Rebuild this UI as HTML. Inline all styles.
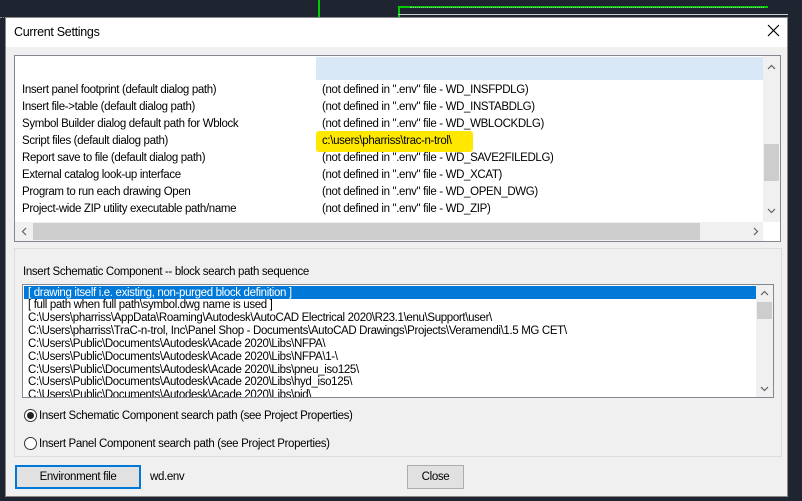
<!DOCTYPE html>
<html><head><meta charset="utf-8"><style>
*{margin:0;padding:0;box-sizing:border-box}
body{width:802px;height:501px;overflow:hidden;background:#1e2530;font-family:"Liberation Sans",sans-serif;font-size:11.5px;letter-spacing:-0.35px;color:#000;position:relative}
.a{position:absolute}
.t{position:absolute;white-space:nowrap;line-height:14px}
</style></head><body>
<div class="a" style="left:0;top:17px;width:310px;height:1px;border-top:1px dotted #888"></div>
<div class="a" style="left:318px;top:0;width:2px;height:17px;background:#0c0"></div>
<div class="a" style="left:398px;top:6px;width:370px;height:2px;background:#0c0"></div>
<div class="a" style="left:398px;top:6px;width:2px;height:11px;background:#0c0"></div>
<div class="a" style="left:410px;top:7px;width:354px;height:1px;border-top:1px dotted #bbb"></div>
<div class="a" style="left:398px;top:14px;width:390px;height:1px;background:#ccc"></div>
<div class="a" style="left:5px;top:17px;width:783px;height:480px;background:#f0f0f0;border:1px solid #888"></div>
<div class="a" style="left:6px;top:18px;width:781px;height:29px;background:#fff"></div>
<div class="t" style="left:14px;top:25px;font-size:12.5px;letter-spacing:-0.3px">Current Settings</div>
<svg class="a" style="left:767px;top:24px" width="13" height="13"><path d="M1 1L12 12M12 1L1 12" stroke="#000" stroke-width="1.2"/></svg>
<div class="a" style="left:14px;top:55px;width:767px;height:187px;background:#fff;border:1px solid #828790"></div>
<div class="a" style="left:316px;top:57px;width:447px;height:23px;background:#d9e8f6"></div>
<div class="a" style="left:316px;top:131px;width:157px;height:21px;background:#ffe800;border-radius:3px"></div>
<div class="t" style="left:22px;top:83px">Insert panel footprint (default dialog path)</div>
<div class="t" style="left:22px;top:100px">Insert file-&gt;table (default dialog path)</div>
<div class="t" style="left:22px;top:117px">Symbol Builder dialog default path for Wblock</div>
<div class="t" style="left:22px;top:134px">Script files (default dialog path)</div>
<div class="t" style="left:22px;top:151px">Report save to file (default dialog path)</div>
<div class="t" style="left:22px;top:168px">External catalog look-up interface</div>
<div class="t" style="left:22px;top:185px">Program to run each drawing Open</div>
<div class="t" style="left:22px;top:202px">Project-wide ZIP utility executable path/name</div>
<div class="t" style="left:322px;top:83px">(not defined in ".env" file - WD_INSFPDLG)</div>
<div class="t" style="left:322px;top:100px">(not defined in ".env" file - WD_INSTABDLG)</div>
<div class="t" style="left:322px;top:117px">(not defined in ".env" file - WD_WBLOCKDLG)</div>
<div class="t" style="left:322px;top:134px">c:\users\pharriss\trac-n-trol\</div>
<div class="t" style="left:322px;top:151px">(not defined in ".env" file - WD_SAVE2FILEDLG)</div>
<div class="t" style="left:322px;top:168px">(not defined in ".env" file - WD_XCAT)</div>
<div class="t" style="left:322px;top:185px">(not defined in ".env" file - WD_OPEN_DWG)</div>
<div class="t" style="left:322px;top:202px">(not defined in ".env" file - WD_ZIP)</div>
<div class="a" style="left:763px;top:56px;width:17px;height:166px;background:#f0f0f0"></div>
<div class="a" style="left:764px;top:144px;width:15px;height:37px;background:#cdcdcd"></div>
<svg class="a" style="left:767px;top:64px" width="9" height="6"><path d="M1 5L4.5 1.5L8 5" stroke="#606060" fill="none" stroke-width="1.2"/></svg>
<svg class="a" style="left:767px;top:208px" width="9" height="6"><path d="M1 1L4.5 4.5L8 1" stroke="#606060" fill="none" stroke-width="1.2"/></svg>
<div class="a" style="left:15px;top:222px;width:748px;height:19px;background:#f0f0f0"></div>
<div class="a" style="left:33px;top:223px;width:667px;height:17px;background:#cdcdcd"></div>
<svg class="a" style="left:21px;top:227px" width="6" height="9"><path d="M5 1L1.5 4.5L5 8" stroke="#606060" fill="none" stroke-width="1.2"/></svg>
<svg class="a" style="left:753px;top:227px" width="6" height="9"><path d="M1 1L4.5 4.5L1 8" stroke="#606060" fill="none" stroke-width="1.2"/></svg>
<div class="a" style="left:14px;top:248px;width:768px;height:209px;border:1px solid #dcdcdc"></div>
<div class="t" style="left:23px;top:265px">Insert Schematic Component -- block search path sequence</div>
<div class="a" style="left:22px;top:284px;width:752px;height:114px;background:#fff;border:1px solid #828790;overflow:hidden"></div>
<div class="a" style="left:24px;top:286px;width:733px;height:13px;background:#0078d7"></div>
<div class="t" style="left:28px;top:286px;line-height:14px;color:#fff">[ drawing itself i.e. existing, non-purged block definition ]</div>
<div class="a" style="left:23px;top:299px;width:734px;height:98px;overflow:hidden">
<div class="t" style="left:5px;top:0;line-height:12.9px">[ full path when full path\symbol.dwg name is used ]<br>C:\Users\pharriss\AppData\Roaming\Autodesk\AutoCAD Electrical 2020\R23.1\enu\Support\user\<br>C:\Users\pharriss\TraC-n-trol, Inc\Panel Shop - Documents\AutoCAD Drawings\Projects\Veramendi\1.5 MG CET\<br>C:\Users\Public\Documents\Autodesk\Acade 2020\Libs\NFPA\<br>C:\Users\Public\Documents\Autodesk\Acade 2020\Libs\NFPA\1-\<br>C:\Users\Public\Documents\Autodesk\Acade 2020\Libs\pneu_iso125\<br>C:\Users\Public\Documents\Autodesk\Acade 2020\Libs\hyd_iso125\<br>C:\Users\Public\Documents\Autodesk\Acade 2020\Libs\pid\</div></div>
<div class="a" style="left:756px;top:285px;width:17px;height:112px;background:#f0f0f0"></div>
<div class="a" style="left:757px;top:302px;width:15px;height:17px;background:#cdcdcd"></div>
<svg class="a" style="left:760px;top:290px" width="9" height="6"><path d="M1 5L4.5 1.5L8 5" stroke="#606060" fill="none" stroke-width="1.2"/></svg>
<svg class="a" style="left:760px;top:386px" width="9" height="6"><path d="M1 1L4.5 4.5L1 1M1 1L4.5 4.5L8 1" stroke="#606060" fill="none" stroke-width="1.2"/></svg>
<div class="a" style="left:24px;top:409px;width:13px;height:13px;border-radius:50%;border:1px solid #333;background:#fff"></div>
<div class="a" style="left:27px;top:412px;width:7px;height:7px;border-radius:50%;background:#222"></div>
<div class="t" style="left:39px;top:409px">Insert Schematic Component search path  (see Project Properties)</div>
<div class="a" style="left:24px;top:437px;width:13px;height:13px;border-radius:50%;border:1px solid #333;background:#fff"></div>
<div class="t" style="left:39px;top:437px">Insert Panel Component search path  (see Project Properties)</div>
<div class="a" style="left:15px;top:465px;width:126px;height:24px;background:#e1e1e1;border:2px solid #0078d7"></div>
<div class="t" style="left:15px;top:470px;width:126px;text-align:center">Environment file</div>
<div class="t" style="left:150px;top:470px">wd.env</div>
<div class="a" style="left:407px;top:465px;width:57px;height:24px;background:#e1e1e1;border:1px solid #adadad"></div>
<div class="t" style="left:407px;top:470px;width:57px;text-align:center">Close</div>
</body></html>
